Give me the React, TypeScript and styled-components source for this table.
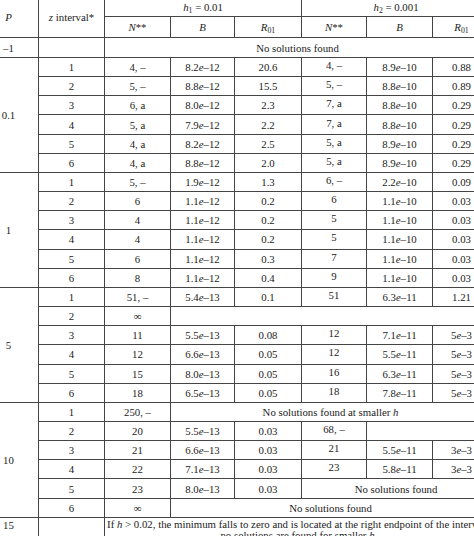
import React from "react";
import styled, { createGlobalStyle } from "styled-components";

const Global = createGlobalStyle`
  html, body { margin: 0; padding: 0; background: #ffffff; overflow: hidden; }
  body { font-family: "Liberation Serif", "Times New Roman", serif; color: #1c1c1c; }
`;

const Frame = styled.div`
  width: 474px;
  height: 536px;
  overflow: hidden;
`;

const Table = styled.table`
  border-collapse: collapse;
  table-layout: fixed;
  width: 512px;
  margin: -4px 0 0 -22px;
  font-size: 10.8px;
  line-height: 12px;
`;

const Row = styled.tr<{ $h: number }>`
  height: ${(p) => p.$h}px;
`;

const HeadCell = styled.th`
  border: 1px solid #444444;
  font-weight: normal;
  text-align: center;
  vertical-align: middle;
  padding: 0 2px;
  white-space: nowrap;
`;

const Cell = styled.td<{ $raise?: boolean; $top?: boolean; $wrap?: boolean }>`
  border: 1px solid #444444;
  text-align: center;
  vertical-align: ${(p) => (p.$top ? "top" : "middle")};
  padding: ${(p) => (p.$top ? "1px 2px 0" : p.$raise ? "0 2px 4px" : "0 2px")};
  white-space: ${(p) => (p.$wrap ? "normal" : "nowrap")};
  line-height: ${(p) => (p.$wrap ? "11.5px" : "12px")};
`;

const I = styled.i`
  font-style: italic;
`;

const Sub = styled.sub`
  font-size: 0.72em;
  vertical-align: -0.3em;
  line-height: 0;
`;

const Sci = ({ v }: { v: string }) => {
  const [m, x] = v.split("e");
  return (
    <>
      {m}
      <I>e</I>
      {x}
    </>
  );
};

type C = { t?: React.ReactNode; span?: number; raise?: boolean };
type R = { z: string; cells: C[] };
type G = { p: string; rows: R[] };

const full = (
  z: string,
  n1: string,
  b1: string,
  r1: string,
  n2: string,
  b2: string,
  r2: string
): R => ({
  z,
  cells: [
    { t: n1 },
    { t: <Sci v={b1} /> },
    { t: r1 },
    { t: n2, raise: true },
    { t: <Sci v={b2} /> },
    { t: r2.includes("e") ? <Sci v={r2} /> : r2 },
  ],
});

const groups: G[] = [
  {
    p: "0.1",
    rows: [
      full("1", "4, –", "8.2e–12", "20.6", "4, –", "8.9e–10", "0.88"),
      full("2", "5, –", "8.8e–12", "15.5", "5, –", "8.8e–10", "0.89"),
      full("3", "6, a", "8.0e–12", "2.3", "7, a", "8.8e–10", "0.29"),
      full("4", "5, a", "7.9e–12", "2.2", "7, a", "8.8e–10", "0.29"),
      full("5", "4, a", "8.2e–12", "2.5", "5, a", "8.9e–10", "0.29"),
      full("6", "4, a", "8.8e–12", "2.0", "5, a", "8.9e–10", "0.29"),
    ],
  },
  {
    p: "1",
    rows: [
      full("1", "5, –", "1.9e–12", "1.3", "6, –", "2.2e–10", "0.09"),
      full("2", "6", "1.1e–12", "0.2", "6", "1.1e–10", "0.03"),
      full("3", "4", "1.1e–12", "0.2", "5", "1.1e–10", "0.03"),
      full("4", "4", "1.1e–12", "0.2", "5", "1.1e–10", "0.03"),
      full("5", "6", "1.1e–12", "0.3", "7", "1.1e–10", "0.03"),
      full("6", "8", "1.1e–12", "0.4", "9", "1.1e–10", "0.03"),
    ],
  },
  {
    p: "5",
    rows: [
      full("1", "51, –", "5.4e–13", "0.1", "51", "6.3e–11", "1.21"),
      { z: "2", cells: [{ t: "∞" }, { t: "", span: 5 }] },
      full("3", "11", "5.5e–13", "0.08", "12", "7.1e–11", "5e–3"),
      full("4", "12", "6.6e–13", "0.05", "12", "5.5e–11", "5e–3"),
      full("5", "15", "8.0e–13", "0.05", "16", "6.3e–11", "5e–3"),
      full("6", "18", "6.5e–13", "0.05", "18", "7.8e–11", "5e–3"),
    ],
  },
  {
    p: "10",
    rows: [
      {
        z: "1",
        cells: [
          { t: "250, –" },
          {
            t: (
              <>
                No solutions found at smaller <I>h</I>
              </>
            ),
            span: 5,
          },
        ],
      },
      {
        z: "2",
        cells: [
          { t: "20" },
          { t: <Sci v="5.5e–13" /> },
          { t: "0.03" },
          { t: "68, –", raise: true },
          { t: "", span: 2 },
        ],
      },
      full("3", "21", "6.6e–13", "0.03", "21", "5.5e–11", "3e–3"),
      full("4", "22", "7.1e–13", "0.03", "23", "5.8e–11", "3e–3"),
      {
        z: "5",
        cells: [
          { t: "23" },
          { t: <Sci v="8.0e–13" /> },
          { t: "0.03" },
          { t: "No solutions found", span: 3 },
        ],
      },
      { z: "6", cells: [{ t: "∞" }, { t: "No solutions found", span: 5 }] },
    ],
  },
];

const widths = [60, 66, 66, 64, 67, 65, 66, 58];
const ROW_H = 19.17;

export default function App() {
  return (
    <Frame>
      <Global />
      <Table>
        <colgroup>
          {widths.map((w, i) => (
            <col key={i} style={{ width: w }} />
          ))}
        </colgroup>
        <thead>
          <Row $h={20}>
            <HeadCell rowSpan={2}>
              <I>P</I>
            </HeadCell>
            <HeadCell rowSpan={2}>
              <I>z</I> interval*
            </HeadCell>
            <HeadCell colSpan={3}>
              <I>h</I>
              <Sub>1</Sub> = 0.01
            </HeadCell>
            <HeadCell colSpan={3}>
              <I>h</I>
              <Sub>2</Sub> = 0.001
            </HeadCell>
          </Row>
          <Row $h={21}>
            {[0, 1].map((k) => (
              <React.Fragment key={k}>
                <HeadCell>
                  <I>N</I>**
                </HeadCell>
                <HeadCell>
                  <I>B</I>
                </HeadCell>
                <HeadCell>
                  <I>R</I>
                  <Sub>01</Sub>
                </HeadCell>
              </React.Fragment>
            ))}
          </Row>
        </thead>
        <tbody>
          <Row $h={20}>
            <Cell>–1</Cell>
            <Cell />
            <Cell colSpan={6}>No solutions found</Cell>
          </Row>
          {groups.map((g) =>
            g.rows.map((r, ri) => (
              <Row $h={ROW_H} key={g.p + r.z}>
                {ri === 0 && <Cell rowSpan={g.rows.length}>{g.p}</Cell>}
                <Cell>{r.z}</Cell>
                {r.cells.map((c, ci) => (
                  <Cell key={ci} colSpan={c.span ?? 1} $raise={c.raise}>
                    {c.t}
                  </Cell>
                ))}
              </Row>
            ))
          )}
          <Row $h={36}>
            <Cell $top>15</Cell>
            <Cell $top />
            <Cell $top $wrap colSpan={6}>
              If <I>h</I> &gt; 0.02, the minimum falls to zero and is located at the right endpoint of the interval;
              <br />
              no solutions are found for smaller <I>h</I>
            </Cell>
          </Row>
        </tbody>
      </Table>
    </Frame>
  );
}
